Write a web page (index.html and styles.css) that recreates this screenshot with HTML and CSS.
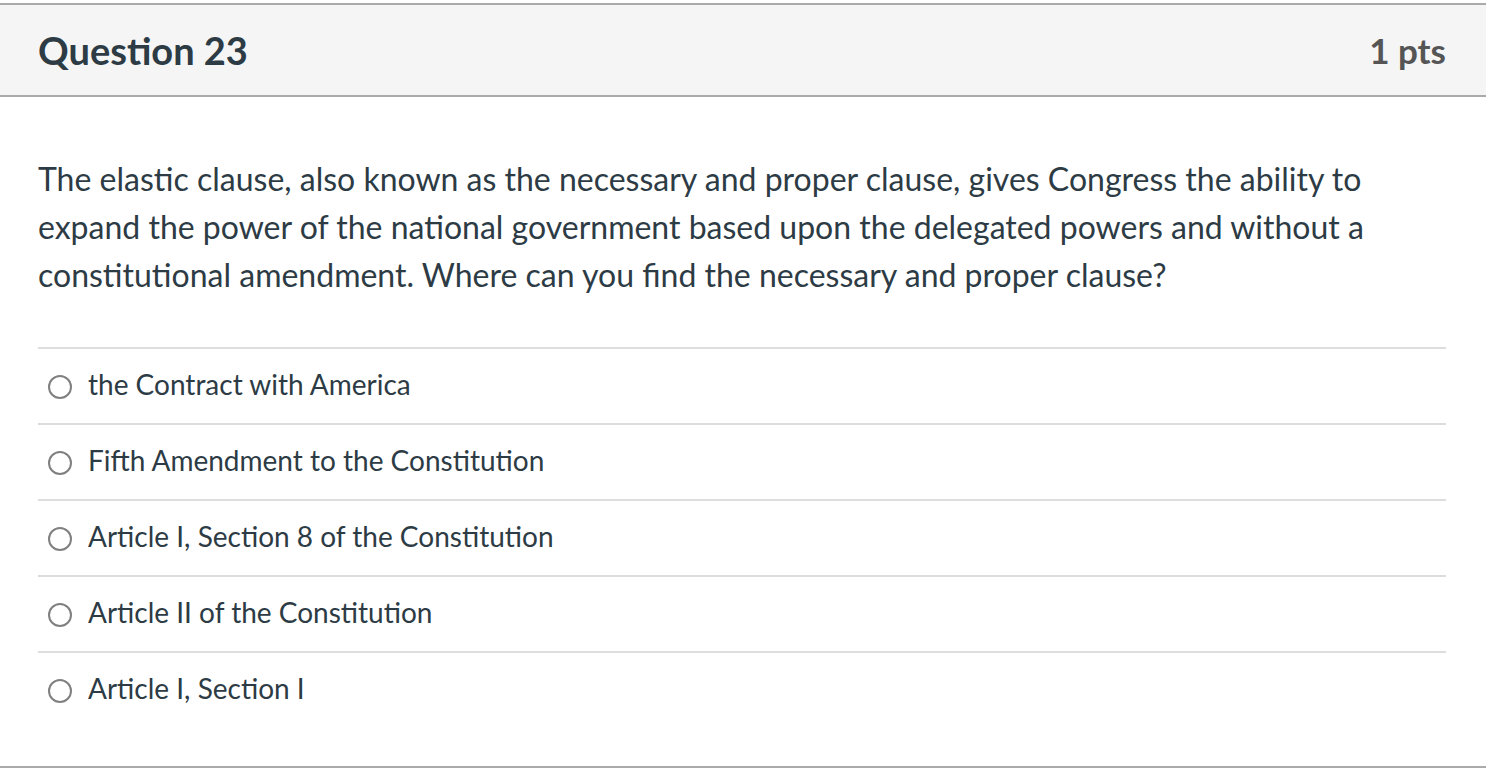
FILE: index.html
```html
<!DOCTYPE html>
<html>
<head>
<meta charset="utf-8">
<link rel="stylesheet" href="styles.css">
</head>
<body>
<div class="question">
  <div class="header">
    <h2 class="title">Question 23</h2>
    <div class="pts">1 pts</div>
  </div>
  <div class="content">
    <p class="text">The elastic clause, also known as the necessary and proper clause, gives Congress the ability to expand the power of the national government based upon the delegated powers and without a constitutional amendment. Where can you find the necessary and proper clause?</p>
    <div class="answers">
      <label class="answer"><span class="radio"></span><span class="label">the Contract with America</span></label>
      <label class="answer"><span class="radio"></span><span class="label">Fifth Amendment to the Constitution</span></label>
      <label class="answer"><span class="radio"></span><span class="label">Article I, Section 8 of the Constitution</span></label>
      <label class="answer"><span class="radio"></span><span class="label">Article II of the Constitution</span></label>
      <label class="answer"><span class="radio"></span><span class="label">Article I, Section I</span></label>
    </div>
  </div>
</div>
</body>
</html>
```
FILE: styles.css
```css
html, body {
  margin: 0;
  padding: 0;
  background: #ffffff;
}
body {
  font-family: Lato, "Open Sans", sans-serif;
  color: #2d3b45;
}
.question {
  margin-top: 3px;
  border-top: 2px solid #aaaaaa;
  border-bottom: 2px solid #aaaaaa;
}
.header {
  background: #f5f5f5;
  border-bottom: 2px solid #aaaaaa;
  height: 90px;
  padding: 0 40px 0 38px;
  display: flex;
  align-items: center;
  justify-content: space-between;
}
.title {
  margin: 0;
  font-size: 38px;
  font-weight: 700;
  color: #2d3b45;
}
.pts {
  font-size: 35px;
  font-weight: 700;
  color: #555555;
}
.content {
  padding: 58px 40px 39px 38px;
}
.text {
  margin: 0 0 48px 0;
  font-size: 32px;
  line-height: 48px;
}
.answer {
  display: flex;
  align-items: center;
  height: 74px;
  border-top: 2px solid #dddddd;
}
.radio {
  box-sizing: border-box;
  width: 24px;
  height: 24px;
  border: 2px solid #808080;
  border-radius: 50%;
  margin: 2px 16px 0 10px;
  flex: none;
}
.label {
  font-size: 28px;
  position: relative;
  top: -2px;
}
```
